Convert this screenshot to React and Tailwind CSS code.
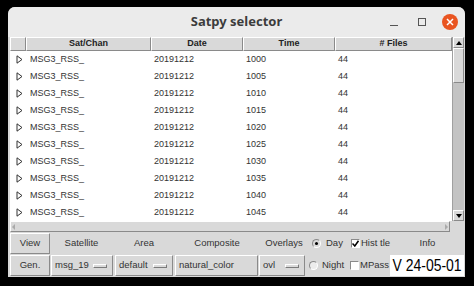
import React from 'react';

const rows = ['1000', '1005', '1010', '1015', '1020', '1025', '1030', '1035', '1040', '1045'];

const raised = 'border border-t-white border-l-white border-r-[#8a8a8a] border-b-[#8a8a8a]';

const Triangle = () => (
  <svg width="7" height="9" viewBox="0 0 7 9" className="shrink-0">
    <path d="M1 0.8 L6 4.5 L1 8.2 Z" fill="none" stroke="#333" strokeWidth="1" />
  </svg>
);

const Dropdown = ({ label, width }) => (
  <div className={`${raised} h-full flex items-center justify-between pl-[3px] pr-[5px] bg-[#d9d9d9] ${width}`}>
    <span>{label}</span>
    <span className="w-[14px] h-[4px] bg-[#d9d9d9] border border-t-white border-l-white border-r-[#7a7a7a] border-b-[#7a7a7a]"></span>
  </div>
);

export default function App() {
  return (
    <div
      className="w-[474px] h-[286px] bg-black pt-[7px] pl-[8px] text-[#222]"
      style={{ fontFamily: '"Liberation Sans", Arial, sans-serif' }}
    >
      <div className="w-[457px] h-[270px] bg-[#d9d9d9] rounded-t-[7px] flex flex-col overflow-hidden">
        {/* Title bar */}
        <div className="h-[30px] bg-[#ebebeb] flex items-center relative shrink-0">
          <span
            className="w-full text-center text-[13px] font-bold text-[#3c3c3c]"
            style={{ fontFamily: '"Noto Sans", "Liberation Sans", sans-serif' }}
          >
            Satpy selector
          </span>
          <div className="absolute right-[7px] top-[7px] flex items-center gap-[16px]">
            <span className="w-[8px] h-[1px] bg-[#555] mt-[6px] mr-[4px]"></span>
            <span className="w-[8px] h-[8px] border border-[#555]"></span>
            <span className="w-[16px] h-[16px] rounded-full bg-[#e95420] flex items-center justify-center">
              <svg width="8" height="8" viewBox="0 0 8 8">
                <path d="M1 1 L7 7 M7 1 L1 7" stroke="white" strokeWidth="1.5" />
              </svg>
            </span>
          </div>
        </div>

        {/* Table */}
        <div className="pl-[2px] pr-[1px] flex flex-col">
          <div className="flex h-[184px] bg-white">
            <div className="flex flex-col w-[442px]">
              <div className="flex h-[14px] text-[9px] font-bold shrink-0">
                <div className={`${raised} w-[16px] bg-[#d9d9d9]`}></div>
                <div className={`${raised} w-[125px] bg-[#d9d9d9] flex items-center justify-center`}>Sat/Chan</div>
                <div className={`${raised} w-[92px] bg-[#d9d9d9] flex items-center justify-center`}>Date</div>
                <div className={`${raised} w-[92px] bg-[#d9d9d9] flex items-center justify-center`}>Time</div>
                <div className={`${raised} w-[117px] bg-[#d9d9d9] flex items-center justify-center`}># Files</div>
              </div>
              {rows.map((t) => (
                <div key={t} className="flex h-[17px] items-center text-[9px] text-[#333]">
                  <div className="w-[16px] flex justify-center pl-[2px]"><Triangle /></div>
                  <div className="w-[125px] pl-[4px]">MSG3_RSS_</div>
                  <div className="w-[92px] pl-[3px]">20191212</div>
                  <div className="w-[92px] pl-[3px]">{t}</div>
                  <div className="w-[117px] pl-[3px]">44</div>
                </div>
              ))}
            </div>
            {/* Vertical scrollbar */}
            <div className="w-[12px] bg-[#c3c3c3] flex flex-col border-l border-[#a0a0a0]">
              <div className={`${raised} h-[11px] bg-[#d9d9d9] flex items-center justify-center`}>
                <span className="w-0 h-0 border-l-[3px] border-r-[3px] border-b-[4px] border-l-transparent border-r-transparent border-b-black"></span>
              </div>
              <div className={`${raised} h-[35px] bg-[#d9d9d9]`}></div>
              <div className="flex-1"></div>
              <div className={`${raised} h-[11px] bg-[#d9d9d9] flex items-center justify-center`}>
                <span className="w-0 h-0 border-l-[3px] border-r-[3px] border-t-[4px] border-l-transparent border-r-transparent border-t-black"></span>
              </div>
            </div>
          </div>

          {/* Horizontal scrollbar */}
          <div className="flex h-[11px]">
            <div className={`${raised} w-[440px] bg-[#d9d9d9] flex items-center justify-between px-[1px]`}>
              <span className="w-0 h-0 border-t-[3px] border-b-[3px] border-r-[3px] border-t-transparent border-b-transparent border-r-[#aaa]"></span>
              <span className="w-0 h-0 border-t-[3px] border-b-[3px] border-l-[3px] border-t-transparent border-b-transparent border-l-[#aaa]"></span>
            </div>
            <div className="flex-1"></div>
          </div>

          {/* Label row */}
          <div className="flex h-[21px] mt-[1px] items-center text-[9.5px] text-[#333] whitespace-nowrap">
            <div className={`${raised} w-[40px] h-full flex items-center justify-center`}>View</div>
            <div className="w-[63px] text-center">Satellite</div>
            <div className="w-[62px] text-center">Area</div>
            <div className="w-[84px] text-center">Composite</div>
            <div className="w-[50px] text-center">Overlays</div>
            <div className="w-[42px] flex items-center gap-[5px] pl-[3px]">
              <span className="w-[9px] h-[9px] rounded-full bg-[#d9d9d9] border border-t-[#8a8a8a] border-l-[#8a8a8a] border-r-white border-b-white flex items-center justify-center">
                <span className="w-[3px] h-[3px] rounded-full bg-black"></span>
              </span>
              Day
            </div>
            <div className="w-[40px] flex items-center gap-[1px]">
              <span className="w-[9px] h-[9px] shrink-0 bg-white border border-t-[#8a8a8a] border-l-[#8a8a8a] border-r-white border-b-white flex items-center justify-center">
                <svg width="7" height="7" viewBox="0 0 7 7">
                  <path d="M0.5 3.5 L2.8 6 L6.5 0.8" fill="none" stroke="black" strokeWidth="1.5" />
                </svg>
              </span>
              <span>Hist tle</span>
            </div>
            <div className="flex-1 text-center">Info</div>
          </div>

          {/* Gen row */}
          <div className="flex h-[21px] mt-[1px] items-center text-[9.5px] text-[#333] whitespace-nowrap">
            <div className={`${raised} w-[40px] h-full flex items-center justify-center mr-[1px]`}>Gen.</div>
            <Dropdown label="msg_19" width="w-[62px] mr-[2px]" />
            <Dropdown label="default" width="w-[58px] mr-[2px]" />
            <div className={`${raised} h-full flex items-center pl-[3px] w-[83px] mr-[1px]`}>
              <span>natural_color</span>
            </div>
            <Dropdown label="ovl" width="w-[46px]" />
            <div className="w-[45px] flex items-center gap-[4px] pl-[4px]">
              <span className="w-[9px] h-[9px] shrink-0 rounded-full bg-[#ececec] border border-t-[#8a8a8a] border-l-[#8a8a8a] border-r-white border-b-white"></span>
              Night
            </div>
            <div className="w-[40px] flex items-center gap-[1px]">
              <span className="w-[9px] h-[9px] shrink-0 bg-white border border-t-[#8a8a8a] border-l-[#8a8a8a] border-r-white border-b-white"></span>
              MPass
            </div>
            <div className="flex-1 h-full bg-white flex items-center justify-center overflow-hidden">
              <span className="inline-block text-[17px] text-black scale-x-[0.82]">V 24-05-01</span>
            </div>
          </div>
        </div>
      </div>
    </div>
  );
}
